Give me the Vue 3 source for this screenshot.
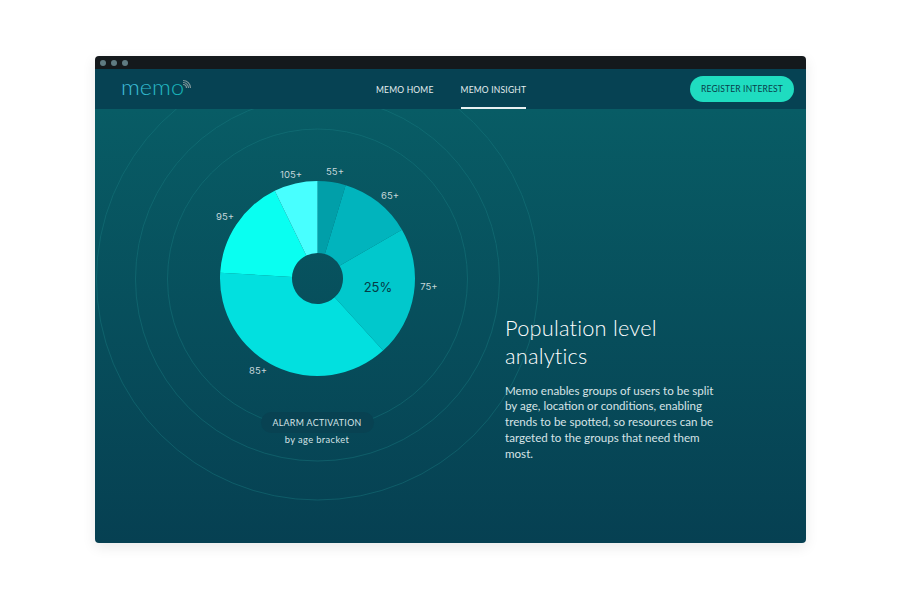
<script setup>
const links = [
  { label: "MEMO HOME", active: false },
  { label: "MEMO INSIGHT", active: true },
];

const rings = [150, 182, 221];
const signal = [3.5, 5.5, 7.5];

const cx = 130.5;
const cy = 119.5;
const outer = 97.5;
const inner = 25.5;

// angles in degrees, clockwise from 12 o'clock
const slices = [
  { from: 0, to: 16.8, fill: "#019fa9" },
  { from: 16.8, to: 60, fill: "#01b4bd" },
  { from: 60, to: 137.7, fill: "#01c8cc" },
  { from: 137.7, to: 273.4, fill: "#02e0df" },
  { from: 273.4, to: 334, fill: "#09fff1" },
  { from: 334, to: 360, fill: "#48ffff" },
];

const labels = [
  { text: "55+", x: 148, y: 16 },
  { text: "65+", x: 203, y: 39.5 },
  { text: "75+", x: 242, y: 130.5 },
  { text: "85+", x: 71, y: 214.5 },
  { text: "95+", x: 38, y: 60.5 },
  { text: "105+", x: 104, y: 18.5 },
];

function point(r, deg) {
  const a = (deg * Math.PI) / 180;
  return `${(cx + r * Math.sin(a)).toFixed(2)} ${(cy - r * Math.cos(a)).toFixed(2)}`;
}

function slicePath(s) {
  const large = s.to - s.from > 180 ? 1 : 0;
  return `M${point(inner, s.from)} L${point(outer, s.from)} A${outer} ${outer} 0 ${large} 1 ${point(outer, s.to)} L${point(inner, s.to)} A${inner} ${inner} 0 ${large} 0 ${point(inner, s.from)}Z`;
}
</script>

<template>
  <div class="page">
    <div class="window">
      <div class="titlebar">
        <span class="dot"></span>
        <span class="dot"></span>
        <span class="dot"></span>
      </div>
      <header class="nav">
        <svg class="logo" width="74" height="28" viewBox="0 0 74 28">
          <defs>
            <linearGradient id="logoFill" x1="0" x2="1" y1="0" y2="0">
              <stop offset="0" stop-color="#45bfe0" />
              <stop offset="1" stop-color="#12b4b4" />
            </linearGradient>
          </defs>
          <text x="0" y="20" class="logo-text" textLength="63" lengthAdjust="spacingAndGlyphs" fill="url(#logoFill)">memo</text>
          <g fill="none" stroke="#7d9599" stroke-width="1.2">
            <path v-for="r in signal" :key="r" :d="`M62 ${13 - r}A${r} ${r} 0 0 1 ${62 + r} 13`" />
          </g>
        </svg>
        <nav class="links">
          <a v-for="link in links" :key="link.label" :class="['link', { active: link.active }]">{{ link.label }}</a>
        </nav>
        <button class="cta" type="button">REGISTER INTEREST</button>
      </header>
      <main class="main">
        <section class="chart">
          <svg class="rings" width="444" height="434" viewBox="0 0 444 434">
            <circle v-for="r in rings" :key="r" cx="222.5" cy="170" :r="r" fill="none" stroke="#1b7f83" stroke-opacity="0.42" />
          </svg>
          <svg class="pie" width="260" height="240" viewBox="0 0 260 240">
            <path v-for="s in slices" :key="s.from" :d="slicePath(s)" :fill="s.fill" />
            <text v-for="l in labels" :key="l.text" :x="l.x" :y="l.y" class="pie-label">{{ l.text }}</text>
            <text x="191" y="133" class="pie-value">25%</text>
          </svg>
          <div class="pill">ALARM ACTIVATION</div>
          <div class="sub">by age bracket</div>
        </section>
        <section class="copy">
          <h1>Population level analytics</h1>
          <p>Memo enables groups of users to be split by age, location or conditions, enabling trends to be spotted, so resources can be targeted to the groups that need them most.</p>
        </section>
      </main>
    </div>
  </div>
</template>

<style>
html,
body {
  margin: 0;
  background: #fff;
}
</style>

<style scoped>
.page {
  width: 900px;
  height: 600px;
  padding: 56px 94px 0 95px;
  box-sizing: border-box;
  font-family: Lato, "Liberation Sans", sans-serif;
}

.window {
  height: 487px;
  border-radius: 4px;
  overflow: hidden;
  display: flex;
  flex-direction: column;
  box-shadow: 0 4px 14px rgba(0, 0, 0, 0.09);
}

.titlebar {
  height: 13px;
  flex: none;
  background: #14191c;
  display: flex;
  align-items: center;
  gap: 5px;
  padding-left: 5px;
}

.dot {
  width: 6px;
  height: 6px;
  border-radius: 50%;
  background: #5f7b82;
}

.nav {
  height: 40px;
  flex: none;
  background: #064253;
  display: flex;
  align-items: center;
  padding: 0 12px 0 26px;
}

.logo {
  flex: none;
  overflow: visible;
}

.logo-text {
  font-family: Lato, sans-serif;
  font-weight: 300;
  font-size: 22px;
}

.links {
  margin-left: 181px;
  display: flex;
  gap: 27px;
  align-self: stretch;
}

.link {
  display: flex;
  align-items: center;
  font-size: 8.5px;
  letter-spacing: 0.2px;
  color: #e4eef0;
  border-bottom: 2px solid transparent;
  padding-top: 4px;
}

.link.active {
  border-bottom-color: #e8f0f2;
}

.cta {
  margin-left: auto;
  width: 104px;
  height: 26px;
  border: none;
  border-radius: 13px;
  background: #1fdcc0;
  color: #083c4a;
  font-family: inherit;
  font-size: 8.5px;
  letter-spacing: 0.15px;
  padding: 0;
}

.main {
  flex: 1;
  display: flex;
  overflow: hidden;
  background: linear-gradient(#085c65, #064052);
}

.chart {
  position: relative;
  flex: none;
  width: 444px;
  margin-right: -34px;
  display: flex;
  flex-direction: column;
  align-items: center;
  padding-top: 50px;
  box-sizing: border-box;
}

.rings {
  position: absolute;
  left: 0;
  top: 0;
}

.pie {
  position: relative;
  flex: none;
}

.pie-label {
  font-family: Inter, sans-serif;
  font-size: 9.5px;
  fill: #c5d6d9;
  text-anchor: middle;
}

.pie-value {
  font-family: Inter, sans-serif;
  font-size: 13px;
  font-weight: 400;
  fill: #053a46;
  text-anchor: middle;
}

.pill {
  position: relative;
  margin-top: 13px;
  width: 113px;
  height: 21px;
  line-height: 21px;
  border-radius: 11px;
  background: #084252;
  color: #d5e4e7;
  font-size: 8.8px;
  letter-spacing: 0.35px;
  text-align: center;
}

.sub {
  position: relative;
  color: #d5e4e7;
  font-size: 9.3px;
  letter-spacing: 0.4px;
  line-height: 14px;
}

.copy {
  padding-top: 205px;
  width: 212px;
  color: #fff;
}

h1 {
  margin: 0;
  font-size: 21.8px;
  font-weight: 300;
  line-height: 28px;
  letter-spacing: 0.2px;
}

p {
  margin: 12.5px 0 0;
  font-size: 11.6px;
  line-height: 15.75px;
  color: #d6e3e6;
}
</style>
